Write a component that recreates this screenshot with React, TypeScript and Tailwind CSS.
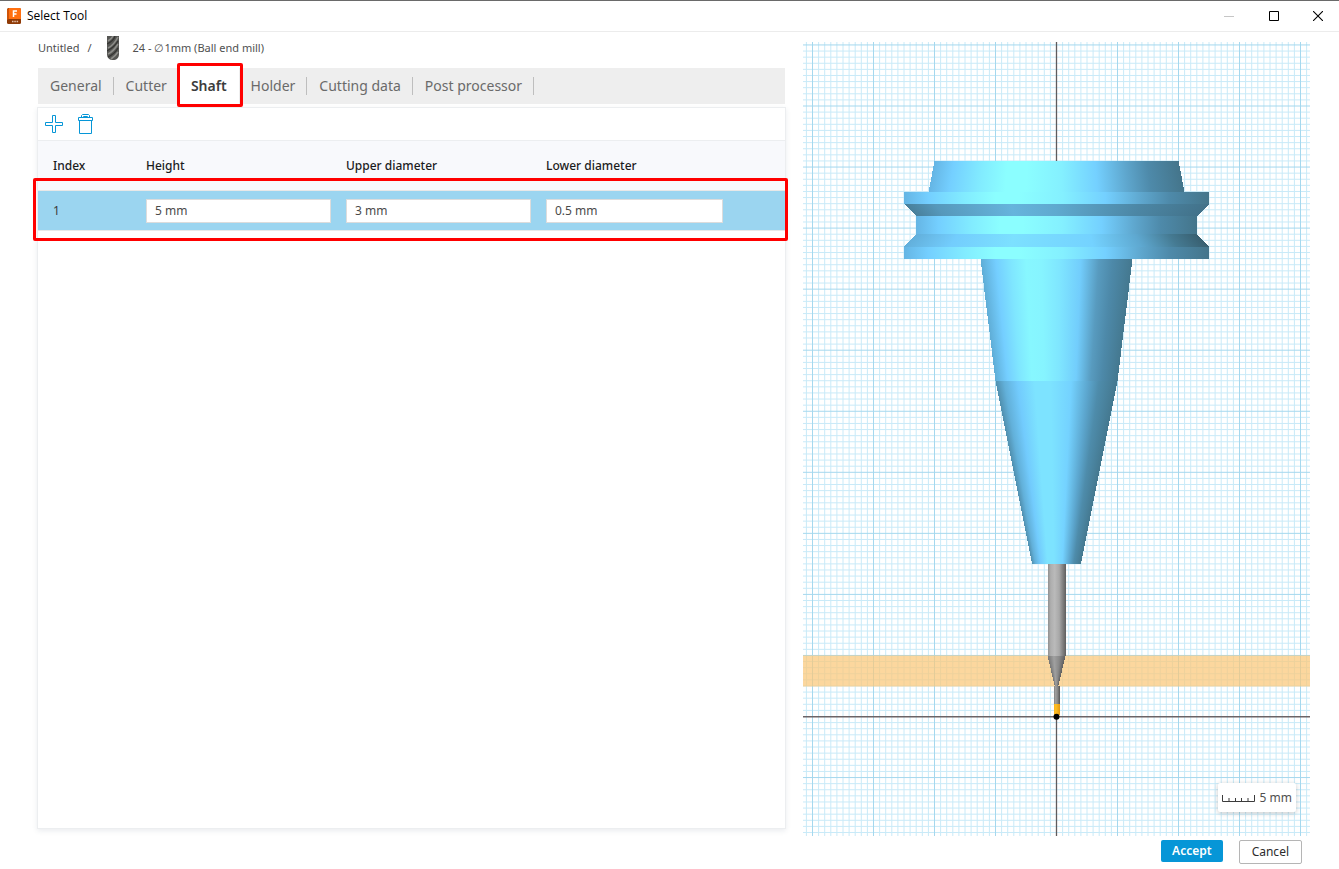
import { useState } from "react";

const tabs = ["General", "Cutter", "Shaft", "Holder", "Cutting data", "Post processor"];

const columns = [
  { key: "height", label: "Height", value: "5 mm" },
  { key: "upper", label: "Upper diameter", value: "3 mm" },
  { key: "lower", label: "Lower diameter", value: "0.5 mm" },
];

// drawing units of the preview: 6.1 units are one millimetre
const VIEW_W = 507;
const VIEW_H = 794;
const CX = 253.5;
const TIP_Y = 674.5;
const STEP_X = 6.1;
const STEP_Y = 6.105;

function range(from: number, to: number) {
  return Array.from({ length: to - from + 1 }, (_, i) => from + i);
}

function Grid() {
  const xs = range(-41, 41);
  const ys = range(-110, 19);
  const isMajor = (n: number) => n % 10 === 0;
  return (
    <g strokeWidth="1">
      <g stroke="#c9eaf8">
        {xs.filter((n) => !isMajor(n)).map((n) => (
          <line key={`x${n}`} x1={CX + n * STEP_X} x2={CX + n * STEP_X} y1="0" y2={VIEW_H} />
        ))}
        {ys.filter((n) => !isMajor(n)).map((n) => (
          <line key={`y${n}`} x1="0" x2={VIEW_W} y1={TIP_Y + n * STEP_Y} y2={TIP_Y + n * STEP_Y} />
        ))}
      </g>
      <g stroke="#a5d8ee">
        {xs.filter(isMajor).map((n) => (
          <line key={`x${n}`} x1={CX + n * STEP_X} x2={CX + n * STEP_X} y1="0" y2={VIEW_H} />
        ))}
        {ys.filter(isMajor).map((n) => (
          <line key={`y${n}`} x1="0" x2={VIEW_W} y1={TIP_Y + n * STEP_Y} y2={TIP_Y + n * STEP_Y} />
        ))}
      </g>
    </g>
  );
}

type FrustumProps = { y1: number; y2: number; w1: number; w2: number; fill: string };

// one slice per unit, so that the shading narrows together with the body
function Frustum({ y1, y2, w1, w2, fill }: FrustumProps) {
  if (w1 === w2) {
    return <rect x={CX - w1 / 2} y={y1} width={w1} height={y2 - y1} fill={`url(#${fill})`} />;
  }
  const count = y2 - y1;
  return (
    <g>
      {range(0, count - 1).map((i) => {
        const w = w1 + ((w2 - w1) * (i + 0.5)) / count;
        return <rect key={i} x={CX - w / 2} y={y1 + i} width={w} height="1" fill={`url(#${fill})`} />;
      })}
    </g>
  );
}

const shades: Record<string, [number, string][]> = {
  body: [
    [0, "#65b5e4"],
    [0.08, "#74cfff"],
    [0.2, "#82ecff"],
    [0.3, "#8bfeff"],
    [0.38, "#8bfeff"],
    [0.52, "#84f0ff"],
    [0.66, "#74d0ff"],
    [0.78, "#5ea6cd"],
    [0.87, "#4e8aaa"],
    [1, "#44758b"],
  ],
  cone: [
    [0, "#5fadd6"],
    [0.1, "#74ceff"],
    [0.2, "#7fe6ff"],
    [0.3, "#87f7ff"],
    [0.4, "#86f4ff"],
    [0.52, "#7fe6ff"],
    [0.66, "#72cdfc"],
    [0.78, "#589bbf"],
    [0.87, "#4d89a9"],
    [1, "#44788f"],
  ],
  nose: [
    [0, "#508fae"],
    [0.07, "#62b0d9"],
    [0.18, "#72cbfd"],
    [0.32, "#7de3ff"],
    [0.45, "#7de3ff"],
    [0.62, "#74d2ff"],
    [0.76, "#5ca6ce"],
    [0.85, "#4e8cab"],
    [1, "#44788f"],
  ],
  grooveTop: [
    [0, "#487f9a"],
    [0.1, "#5698bb"],
    [0.35, "#66b4dc"],
    [0.5, "#5fa9cf"],
    [0.78, "#4c86a4"],
    [1, "#42728a"],
  ],
  grooveBottom: [
    [0, "#62afdb"],
    [0.15, "#73cdfd"],
    [0.35, "#7ce0ff"],
    [0.62, "#74d2ff"],
    [0.78, "#5ea8d0"],
    [0.9, "#457a92"],
    [1, "#385f70"],
  ],
  steel: [
    [0, "#8a8a8a"],
    [0.18, "#aeaeae"],
    [0.4, "#bababa"],
    [0.65, "#a8a8a8"],
    [0.85, "#808080"],
    [1, "#646464"],
  ],
  taper: [
    [0, "#757575"],
    [0.35, "#a0a0a0"],
    [0.65, "#8a8a8a"],
    [1, "#5f5f5f"],
  ],
  cutter: [
    [0, "#f7ad1e"],
    [0.4, "#ffc022"],
    [1, "#e59c14"],
  ],
};

function ToolPreview() {
  return (
    <svg viewBox={`0 0 ${VIEW_W} ${VIEW_H}`} className="block w-full" role="img" aria-label="Tool preview">
      <defs>
        {Object.entries(shades).map(([id, stops]) => (
          <linearGradient key={id} id={id}>
            {stops.map(([offset, color]) => (
              <stop key={offset} offset={offset} stopColor={color} />
            ))}
          </linearGradient>
        ))}
      </defs>
      <rect width={VIEW_W} height={VIEW_H} fill="#fff" />
      <Grid />
      <rect y="613.5" width={VIEW_W} height="31" fill="#fbc878" fillOpacity="0.72" />
      <line x1={CX} x2={CX} y1="0" y2={VIEW_H} stroke="#5f5b5d" strokeWidth="1.3" />
      <line x1="0" x2={VIEW_W} y1="674.7" y2="674.7" stroke="#6b6467" strokeWidth="1.4" />

      <g shapeRendering="crispEdges">
        <Frustum y1={119} y2={150} w1={244} w2={256} fill="body" />
        <Frustum y1={150} y2={162} w1={305} w2={305} fill="body" />
        <Frustum y1={162} y2={174} w1={305} w2={281} fill="grooveTop" />
        <Frustum y1={174} y2={192} w1={281} w2={281} fill="body" />
        <Frustum y1={192} y2={205} w1={281} w2={305} fill="grooveBottom" />
        <Frustum y1={205} y2={217} w1={305} w2={305} fill="body" />
        <Frustum y1={217} y2={339} w1={152} w2={122} fill="cone" />
        <Frustum y1={339} y2={522} w1={122} w2={49} fill="nose" />
        <Frustum y1={522} y2={614} w1={18} w2={18} fill="steel" />
        <Frustum y1={614} y2={645} w1={18} w2={3} fill="taper" />
        <Frustum y1={644} y2={662} w1={6} w2={6} fill="taper" />
        <Frustum y1={662} y2={673} w1={6} w2={6} fill="cutter" />
      </g>
      <circle cx={CX} cy="674.7" r="3" fill="#000" />
    </svg>
  );
}

function AppIcon() {
  return (
    <svg width="14" height="16" viewBox="0 0 14 16" aria-hidden="true">
      <rect width="14" height="16" rx="1.500" fill="#8f3a06" />
      <path d="M2 0H12.500a1.500 1.500 0 0 1 1.500 1.500V11H2z" fill="#ff6f0f" />
      <path d="M0 1.500L2 0v11L0 12z" fill="#cf5408" />
      <path d="M6.500 9V3h3.500M6.500 6h3" stroke="#fff" strokeWidth="1.500" fill="none" />
      <path d="M5 13.500h1.500M7.300 13.500h1.500M9.600 13.500h1.500" stroke="#e2c1ab" strokeWidth="1.500" />
    </svg>
  );
}

function MillIcon() {
  return (
    <svg width="12" height="24" viewBox="0 0 12 24" aria-hidden="true">
      <path d="M0 0h12v18c0 4-2.500 6-6 6s-6-2-6-6z" fill="#565653" />
      <g fill="none">
        <path d="M1 5C3 4 5 2 6 0M1 12c4-2 7-5 10-11M1 18c4-2 7-5 10-10M4 23c3-2 5-4 7-7" stroke="#8d8d89" strokeWidth="1.600" />
        <path d="M0 8C4 6 7 4 8 0M0 15c4-2 8-5 11-10M1 21c4-2 8-5 10-9" stroke="#343432" strokeWidth="1.200" />
      </g>
    </svg>
  );
}

function TitleBar() {
  return (
    <header className="flex h-8 items-center border-t border-b border-t-[#6a6a6a] border-b-[#ececec] pl-[7px]">
      <AppIcon />
      <h1 className="ml-1.5 font-['Open_Sans','Noto_Sans',sans-serif] text-xs text-black">Select Tool</h1>
      <div className="ml-auto flex">
        <button type="button" aria-label="Minimize" className="flex h-7 w-[45px] items-center justify-center">
          <svg width="10" height="10" viewBox="0 0 10 10" stroke="#c6c6c6">
            <path d="M0 5.500h10" />
          </svg>
        </button>
        <button type="button" aria-label="Maximize" className="flex h-7 w-[46px] items-center justify-center">
          <svg width="10" height="10" viewBox="0 0 10 10" fill="none" stroke="#000">
            <path d="M.5.5h9v9h-9z" />
          </svg>
        </button>
        <button type="button" aria-label="Close" className="flex h-7 w-[42px] items-center justify-center">
          <svg width="10" height="10" viewBox="0 0 10 10" stroke="#000" strokeWidth="1.100">
            <path d="M0 0l10 10M10 0L0 10" />
          </svg>
        </button>
      </div>
    </header>
  );
}

function TabBar({ active, onSelect }: { active: string; onSelect: (tab: string) => void }) {
  return (
    <div role="tablist" className="mr-px ml-px flex h-9 bg-[#eeeeee]">
      {tabs.map((tab) => {
        const selected = tab === active;
        return (
          <div key={tab} className={selected ? "relative flex items-center bg-white" : "flex items-center"}>
            <button
              type="button"
              role="tab"
              aria-selected={selected}
              onClick={() => onSelect(tab)}
              className={
                selected
                  ? "h-9 pr-[11px] pl-3 text-sm font-semibold text-[#3c3c3c]"
                  : "h-9 pr-[11px] pl-3 text-sm text-[#6a6a6a]"
              }
            >
              {tab}
            </button>
            <span className={selected || tab === "Cutter" ? "h-[18px] w-px" : "h-[18px] w-px bg-[#bebebe]"} />
            {tab === "Shaft" && (
              <span className="pointer-events-none absolute -top-[5px] -right-1 -bottom-[3px] -left-0.5 rounded-xs border-3 border-[#ff0000]" />
            )}
          </div>
        );
      })}
    </div>
  );
}

function ShaftPanel() {
  const [values, setValues] = useState(columns.map((c) => c.value));

  return (
    <section className="mt-[3px] flex-1 border border-[#eceef0] bg-white shadow-[0_2px_5px_rgba(60,80,110,0.1)]">
      <div className="flex h-8 items-center gap-[15px] pl-[7px]">
        <button type="button" aria-label="Add segment">
          <svg width="18" height="18" viewBox="0 0 18 18" fill="none" stroke="#0696d7">
            <path d="M7.500.5h3v7h7v3h-7v7h-3v-7h-7v-3h7z" />
          </svg>
        </button>
        <button type="button" aria-label="Delete segment">
          <svg width="15" height="20" viewBox="0 0 15 20" fill="none" stroke="#0696d7">
            <path d="M.5 3.500h14v3H.5zM1.500 6.500h12v13h-12zM3.500 3.500v-2l1-1h6l1 1v2M5.500 3v-.5h4V3" />
          </svg>
        </button>
      </div>
      <div className="relative">
        <table className="w-full table-fixed text-left text-xs">
          <thead>
            <tr className="h-[50px] border-t border-[#eceef0] bg-[#f8f9fc] text-[#1c1c1c]">
              <th className="w-[93px] pl-[15px] font-medium">Index</th>
              <th className="w-[200px] pl-[15px] font-medium">{columns[0].label}</th>
              <th className="w-[200px] pl-[15px] font-medium">{columns[1].label}</th>
              <th className="w-[192px] pl-[15px] font-medium">{columns[2].label}</th>
              <th />
            </tr>
          </thead>
          <tbody>
            <tr className="h-10 border-t border-b border-[#e8e8e8] bg-[#9bd5f0] text-[#3c3c3c]">
              <td className="pl-[15px]">1</td>
              {columns.map((c, i) => (
                <td key={c.key} className="pl-[15px]">
                  <input
                    type="text"
                    aria-label={c.label}
                    value={values[i]}
                    onChange={(e) => setValues(values.map((v, n) => (n === i ? e.target.value : v)))}
                    className="block h-6 w-full border border-[#dcdcdc] bg-white px-2 text-[#4a4a4a] outline-none"
                  />
                </td>
              ))}
              <td />
            </tr>
          </tbody>
        </table>
        <span className="pointer-events-none absolute top-[38px] -right-[3px] -bottom-2.5 -left-[5px] rounded-xs border-3 border-[#ff0000]" />
      </div>
    </section>
  );
}

export default function App() {
  const [active, setActive] = useState("Shaft");

  return (
    <div className="flex min-h-screen flex-col bg-white font-['Noto_Sans',sans-serif] text-[#3c3c3c]">
      <TitleBar />
      <main className="grid grid-cols-[749fr_507fr] gap-[17px] pr-[29px] pl-[37px]">
        <div className="mb-[7px] flex min-w-0 flex-col">
          <nav aria-label="Breadcrumb" className="mb-1 flex h-8 items-center pl-px text-[11px] text-[#505050]">
            <a href="#library">Untitled</a>
            <span className="mr-[15px] ml-2">/</span>
            <MillIcon />
            <span className="ml-3.5">24 - ∅1mm (Ball end mill)</span>
          </nav>
          <TabBar active={active} onSelect={setActive} />
          <ShaftPanel />
        </div>
        <div className="relative mt-2.5 min-w-0 self-start">
          <ToolPreview />
          <div className="absolute right-3.5 bottom-6 flex h-[29px] items-center gap-[5px] rounded-xs bg-white px-1 text-xs text-[#505050] shadow-[0_1px_5px_rgba(0,0,0,0.22)]">
            <svg width="33" height="8" viewBox="0 0 33 8" fill="none" stroke="#3c3c3c" aria-hidden="true">
              <path d="M.5 1v6.500h32V1M7 4v3M13.500 4v3M19.500 4v3M26 4v3" />
            </svg>
            <span>5 mm</span>
          </div>
        </div>
      </main>
      <footer className="flex items-start justify-end gap-4 pt-1 pr-[37px]">
        <button type="button" className="h-[22px] rounded-xs bg-[#0696d7] px-[11px] text-xs font-semibold text-white">
          Accept
        </button>
        <button type="button" className="h-6 rounded-xs border border-[#b5b5b5] bg-white px-3 text-xs text-[#2c2c2c]">
          Cancel
        </button>
      </footer>
    </div>
  );
}
